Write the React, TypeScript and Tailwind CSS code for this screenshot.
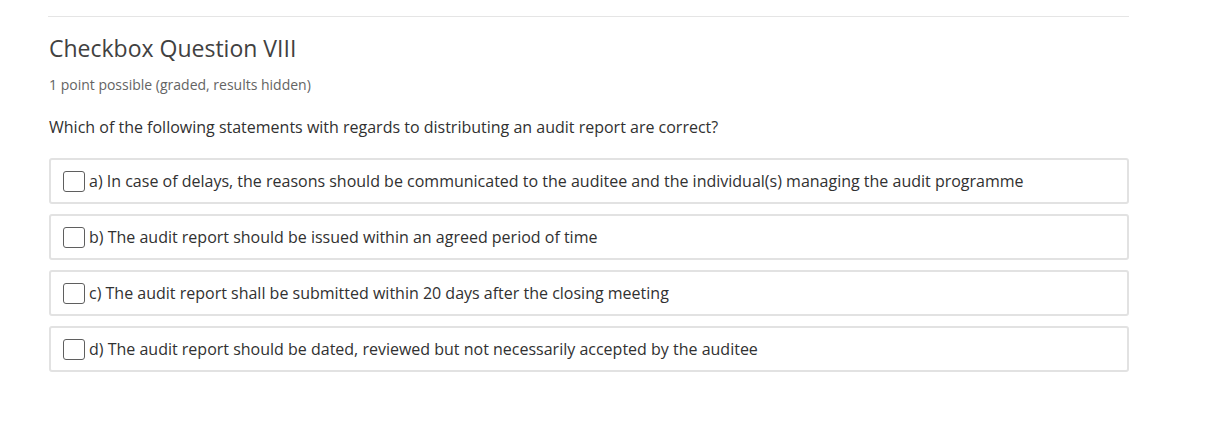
import React from 'react';

const options = [
  'a) In case of delays, the reasons should be communicated to the auditee and the individual(s) managing the audit programme',
  'b) The audit report should be issued within an agreed period of time',
  'c) The audit report shall be submitted within 20 days after the closing meeting',
  'd) The audit report should be dated, reviewed but not necessarily accepted by the auditee',
];

export default function App() {
  return (
    <div
      className="w-[1213px] h-[421px] bg-white"
      style={{ fontFamily: '"Open Sans", "Liberation Sans", sans-serif' }}
    >
      <div className="ml-[48px] w-[1081px] pt-[16px]">
        <div className="border-t border-[#e5e5e5]" />
        <h2 className="mt-[16px] ml-px text-[23px] leading-[30px] text-[#414141] font-normal">
          Checkbox Question VIII
        </h2>
        <p className="mt-[12px] ml-px text-[14px] leading-[20px] text-[#646464]">
          1 point possible (graded, results hidden)
        </p>
        <p className="mt-[21px] ml-px text-[16px] leading-[22px] text-[#313131]">
          Which of the following statements with regards to distributing an audit report are correct?
        </p>
        <div className="mt-[20px] ml-px flex flex-col gap-[10px]">
          {options.map((o) => (
            <label
              key={o}
              className="flex items-center h-[46px] border-2 border-[#e2e2e2] rounded-[3px] pl-[12px]"
            >
              <span className="w-[22px] h-[21px] border border-[#5f5f5f] rounded-[3px] bg-white shrink-0" />
              <span className="ml-[4px] text-[16px] text-[#313131]">{o}</span>
            </label>
          ))}
        </div>
      </div>
    </div>
  );
}
